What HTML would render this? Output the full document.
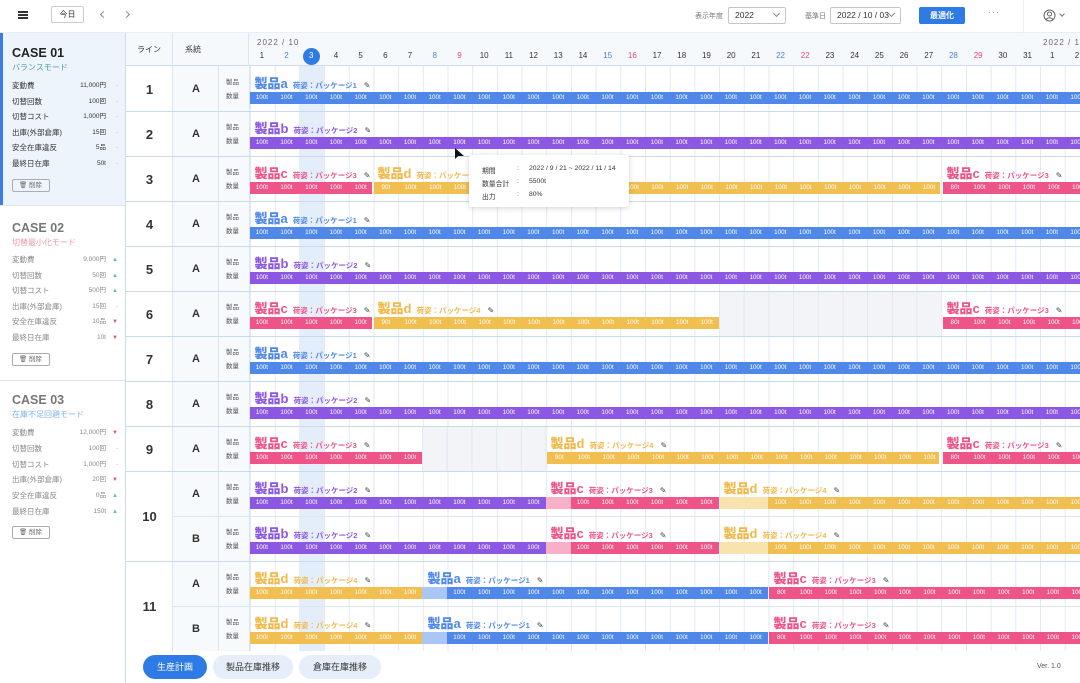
<!DOCTYPE html>
<html><head><meta charset="utf-8"><style>
*{margin:0;padding:0;box-sizing:border-box}
body{width:1080px;height:683px;overflow:hidden;background:#fff;font-family:"Liberation Sans","Noto Sans CJK JP",sans-serif;color:#333;position:relative}
.a{position:absolute}
.top{left:0;top:0;width:1080px;height:33px;background:#fff;border-bottom:1px solid #e8eef5}
.sel{border:1px solid #bfc6cf;border-radius:2px;height:17px;top:7px;font-size:8.5px;line-height:15px;padding-left:6px;color:#333;white-space:nowrap}
.sel b{position:absolute;right:6px;top:3px;width:5px;height:5px;border-right:1px solid #888;border-bottom:1px solid #888;transform:rotate(45deg)}
.side{left:0;top:33px;width:126px;height:650px;border-right:1px solid #cddcee;background:#fff;border-bottom-left-radius:8px}
.card{position:absolute;left:0;width:125px}
.card h2{position:absolute;left:12px;font-size:12.5px;font-weight:bold}
.card .sub{position:absolute;left:12px;font-size:8px}
.m{position:absolute;left:12px;width:108px;font-size:7.5px;height:12px;line-height:12px}
.m span{position:absolute;right:14px;font-size:6.5px}
.m em{position:absolute;right:2px;font-style:normal;font-size:6px}
.del{position:absolute;left:12px;width:38px;height:13px;border:1px solid #aab;border-radius:2px;font-size:6.5px;line-height:11px;padding-left:6px;color:#666}
.up{color:#5cc0a0}.dn{color:#e8507a}.no{color:#bbb}
.hdr{left:126px;top:33px;width:954px;height:33px;background:#f6f9fc;border-bottom:1px solid #cddcee}
.dn2{position:absolute;top:51px;width:24.7px;text-align:center;font-size:8px;color:#333}
.bl{color:#4a7fe0!important}.rd{color:#e8457a!important}
.col1{left:126px;top:66px;width:47px;height:585px;background:#fff;border-right:1px solid #dbe6f2}
.col2{left:173px;top:66px;width:46px;height:585px;background:#f7fafd;border-right:1px solid #dbe6f2}
.col3{left:219px;top:66px;width:30.5px;height:585px;background:#f7fafd;border-right:1px solid #dbe6f2}
#g{left:249.5px;top:66px;width:831px;height:585px;overflow:hidden;background-image:linear-gradient(to right,#e1e9f3 1px,transparent 1px);background-size:24.7px 100%}
.hl{position:absolute;left:49.4px;top:0;width:24.7px;height:585px;background:#e4eefa}
.gr{position:absolute;height:45px;background:#f2f4f7;background-image:linear-gradient(to right,#e1e9f3 1px,transparent 1px);background-size:24.7px 100%}
.bar{position:absolute;height:12px;display:flex;overflow:hidden;white-space:nowrap}
.bar i{flex:0 0 24.7px;text-align:center;font-style:normal;color:#fff;font-size:6.3px;line-height:12px}
.A{background:#4f88e8}.B{background:#8c58e3}.C{background:#ee5488}.D{background:#f1be50}
.lA{background:#aac6f3}.lC{background:#f6b1c8}.lD{background:#f8e2ae}
.lb{position:absolute;white-space:nowrap;font-weight:bold}
.lb b{font-size:13px}.lb s{text-decoration:none;font-size:7.5px;margin-left:5px}.lb u{text-decoration:none;color:#444;font-size:8px;margin-left:7px;font-family:"DejaVu Sans",sans-serif;font-weight:normal}
.tA{color:#4f88e8}.tB{color:#8c58e3}.tC{color:#ee5488}.tD{color:#f0b94a}
.hline{position:absolute;height:1px;background:#c9daee}
.num{position:absolute;left:126px;width:47px;text-align:center;font-weight:bold;font-size:13px}
.sys{position:absolute;left:173px;width:46px;text-align:center;font-weight:bold;font-size:11px}
.pl{position:absolute;left:226px;font-size:6.5px;color:#555;line-height:14px}
.tip{left:469px;top:155px;width:160px;height:52px;background:#fff;border-radius:3px;box-shadow:0 1px 6px rgba(0,0,0,.18);font-size:6.8px;color:#333}
.tip div{position:absolute;left:13px;white-space:nowrap}
.bb{top:651px;left:126px;width:954px;height:32px;background:#fff}
.pill{position:absolute;top:655px;height:24px;border-radius:12px;font-size:9px;line-height:24px;text-align:center}
</style></head><body>

<div class="a top"></div>
<div class="a" style="left:18px;top:11px;width:10px;height:2px;background:#333;box-shadow:0 3px 0 #333,0 6px 0 #333"></div>
<div class="a" style="left:51px;top:6px;width:33px;height:17px;border:1px solid #ccc;border-radius:2px;font-size:8px;line-height:15px;text-align:center">今日</div>
<div class="a" style="left:101px;top:12px;width:5px;height:5px;border-left:1px solid #888;border-bottom:1px solid #888;transform:rotate(45deg)"></div>
<div class="a" style="left:124px;top:12px;width:5px;height:5px;border-right:1px solid #888;border-top:1px solid #888;transform:rotate(45deg)"></div>
<div class="a" style="left:695px;top:11px;font-size:7px;color:#777">表示年度</div>
<div class="a sel" style="left:728px;width:58px">2022<b></b></div>
<div class="a" style="left:805px;top:11px;font-size:7px;color:#777">基準日</div>
<div class="a sel" style="left:830px;width:71px">2022 / 10 / 03<b></b></div>
<div class="a" style="left:919px;top:7px;width:46px;height:17px;background:#2f7be6;border-radius:2px;color:#fff;font-size:8px;font-weight:bold;line-height:17px;text-align:center">最適化</div>
<div class="a" style="left:988px;top:7px;font-size:9px;color:#999;letter-spacing:1px">···</div>
<div class="a" style="left:1023px;top:0;width:1px;height:33px;background:#eef1f5"></div>
<svg class="a" style="left:1043px;top:9px" width="13" height="13" viewBox="0 0 13 13"><circle cx="6.5" cy="6.5" r="5.5" fill="none" stroke="#666"/><circle cx="6.5" cy="5" r="2" fill="none" stroke="#666"/><path d="M3 10.5 Q6.5 7 10 10.5" fill="none" stroke="#666"/></svg>
<div class="a" style="left:1060px;top:12px;width:4px;height:4px;border-right:1px solid #777;border-bottom:1px solid #777;transform:rotate(45deg)"></div>

<!-- sidebar -->
<div class="a side">
 <div class="card" style="top:0;height:172px;background:#eef4fc;border-left:3px solid #3b7de0">
  <h2 style="top:13px;left:9px;color:#222">CASE 01</h2>
  <div class="sub" style="top:29px;left:9px;color:#4f9bb2">バランスモード</div>
  <div class="m" style="top:47px;left:9px">変動費<span>11,000円</span><em class="no">-</em></div>
  <div class="m" style="top:63px;left:9px">切替回数<span>100回</span><em class="no">-</em></div>
  <div class="m" style="top:78px;left:9px">切替コスト<span>1,000円</span><em class="no">-</em></div>
  <div class="m" style="top:94px;left:9px">出庫(外部倉庫)<span>15回</span><em class="no">-</em></div>
  <div class="m" style="top:109px;left:9px">安全在庫違反<span>5品</span><em class="no">-</em></div>
  <div class="m" style="top:125px;left:9px">最終日在庫<span>50t</span><em class="no">-</em></div>
  <div class="del" style="top:146px;left:9px">🗑 削除</div>
 </div>
 <div class="card" style="top:172px;height:175px;border-top:1px solid #dde6f0;color:#888">
  <h2 style="top:15px;color:#777">CASE 02</h2>
  <div class="sub" style="top:31px;color:#e99aa8">切替最小化モード</div>
  <div class="m" style="top:48px">変動費<span>9,000円</span><em class="up">▲</em></div>
  <div class="m" style="top:64px">切替回数<span>50回</span><em class="up">▲</em></div>
  <div class="m" style="top:79px">切替コスト<span>500円</span><em class="up">▲</em></div>
  <div class="m" style="top:95px">出庫(外部倉庫)<span>15回</span><em class="no">-</em></div>
  <div class="m" style="top:110px">安全在庫違反<span>10品</span><em class="dn">▼</em></div>
  <div class="m" style="top:126px">最終日在庫<span>10t</span><em class="dn">▼</em></div>
  <div class="del" style="top:147px">🗑 削除</div>
 </div>
 <div class="card" style="top:347px;height:175px;border-top:1px solid #dde6f0;color:#888">
  <h2 style="top:12px;color:#777">CASE 03</h2>
  <div class="sub" style="top:28px;color:#7fb4e8">在庫不足回避モード</div>
  <div class="m" style="top:46px">変動費<span>12,000円</span><em class="dn">▼</em></div>
  <div class="m" style="top:62px">切替回数<span>100回</span><em class="no">-</em></div>
  <div class="m" style="top:78px">切替コスト<span>1,000円</span><em class="no">-</em></div>
  <div class="m" style="top:93px">出庫(外部倉庫)<span>20回</span><em class="dn">▼</em></div>
  <div class="m" style="top:109px">安全在庫違反<span>0品</span><em class="up">▲</em></div>
  <div class="m" style="top:125px">最終日在庫<span>150t</span><em class="up">▲</em></div>
  <div class="del" style="top:145px">🗑 削除</div>
 </div>
</div>

<!-- header -->
<div class="a hdr"></div>
<div class="a" style="left:126px;top:33px;width:47px;height:33px;border-right:1px solid #dbe6f2;font-size:8px;text-align:center;line-height:33px">ライン</div>
<div class="a" style="left:173px;top:33px;width:76px;height:33px;border-right:1px solid #dbe6f2;font-size:8px;padding-left:12px;line-height:33px">系統</div>
<div class="a" style="left:257px;top:38px;font-size:8px;color:#666;letter-spacing:1px;white-space:nowrap">2022 / 10</div>
<div class="a" style="left:1043px;top:38px;font-size:8px;color:#666;letter-spacing:1px;white-space:nowrap">2022 / 11</div>
<div class="a" style="left:303px;top:48px;width:17px;height:17px;border-radius:50%;background:#2f7be6"></div>
<div class="a" style="left:249.5px;top:0;width:840px;height:66px">
<div class="dn2" style="left:0">1</div><div class="dn2 bl" style="left:24.7px">2</div><div class="dn2" style="left:49.4px;color:#fff">3</div><div class="dn2" style="left:74.1px">4</div><div class="dn2" style="left:98.8px">5</div><div class="dn2" style="left:123.5px">6</div><div class="dn2" style="left:148.2px">7</div><div class="dn2 bl" style="left:172.9px">8</div><div class="dn2 rd" style="left:197.6px">9</div><div class="dn2" style="left:222.3px">10</div><div class="dn2" style="left:247px">11</div><div class="dn2" style="left:271.7px">12</div><div class="dn2" style="left:296.4px">13</div><div class="dn2" style="left:321.1px">14</div><div class="dn2 bl" style="left:345.8px">15</div><div class="dn2 rd" style="left:370.5px">16</div><div class="dn2" style="left:395.2px">17</div><div class="dn2" style="left:419.9px">18</div><div class="dn2" style="left:444.6px">19</div><div class="dn2" style="left:469.3px">20</div><div class="dn2" style="left:494px">21</div><div class="dn2 bl" style="left:518.7px">22</div><div class="dn2 rd" style="left:543.4px">22</div><div class="dn2" style="left:568.1px">23</div><div class="dn2" style="left:592.8px">24</div><div class="dn2" style="left:617.5px">25</div><div class="dn2" style="left:642.2px">26</div><div class="dn2" style="left:666.9px">27</div><div class="dn2 bl" style="left:691.6px">28</div><div class="dn2 rd" style="left:716.3px">29</div><div class="dn2" style="left:741px">30</div><div class="dn2" style="left:765.7px">31</div><div class="dn2" style="left:790.4px">1</div><div class="dn2" style="left:815.1px">2</div>
</div>

<div class="a col1"></div><div class="a col2"></div><div class="a col3"></div>

<div class="a" id="g">
 <div class="hl"></div>
 <div class="gr" style="left:469.3px;top:225px;width:222.3px"></div>
 <div class="gr" style="left:172.9px;top:360px;width:123.5px"></div>

 <div class="lb tA" style="left:5px;top:7px"><b>製品a</b><s>荷姿：パッケージ1</s><u>✎</u></div>
 <div class="bar A" style="left:0;top:26px;width:840px"><i>100t</i><i>100t</i><i>100t</i><i>100t</i><i>100t</i><i>100t</i><i>100t</i><i>100t</i><i>100t</i><i>100t</i><i>100t</i><i>100t</i><i>100t</i><i>100t</i><i>100t</i><i>100t</i><i>100t</i><i>100t</i><i>100t</i><i>100t</i><i>100t</i><i>100t</i><i>100t</i><i>100t</i><i>100t</i><i>100t</i><i>100t</i><i>100t</i><i>100t</i><i>100t</i><i>100t</i><i>100t</i><i>100t</i><i>100t</i></div>
 <div class="lb tB" style="left:5px;top:52px"><b>製品b</b><s>荷姿：パッケージ2</s><u>✎</u></div>
 <div class="bar B" style="left:0;top:71px;width:840px"><i>100t</i><i>100t</i><i>100t</i><i>100t</i><i>100t</i><i>100t</i><i>100t</i><i>100t</i><i>100t</i><i>100t</i><i>100t</i><i>100t</i><i>100t</i><i>100t</i><i>100t</i><i>100t</i><i>100t</i><i>100t</i><i>100t</i><i>100t</i><i>100t</i><i>100t</i><i>100t</i><i>100t</i><i>100t</i><i>100t</i><i>100t</i><i>100t</i><i>100t</i><i>100t</i><i>100t</i><i>100t</i><i>100t</i><i>100t</i></div>
 <div class="lb tC" style="left:5px;top:97px"><b>製品c</b><s>荷姿：パッケージ3</s><u>✎</u></div>
 <div class="lb tD" style="left:128px;top:97px"><b>製品d</b><s>荷姿：パッケージ4</s></div>
 <div class="lb tC" style="left:697px;top:97px"><b>製品c</b><s>荷姿：パッケージ3</s><u>✎</u></div>
 <div class="bar C" style="left:0;top:116px;width:122.5px"><i>100t</i><i>100t</i><i>100t</i><i>100t</i><i>100t</i></div>
 <div class="bar D" style="left:124px;top:116px;width:566px"><i>90t</i><i>100t</i><i>100t</i><i>100t</i><i>100t</i><i>100t</i><i>100t</i><i>100t</i><i>100t</i><i>100t</i><i>100t</i><i>100t</i><i>100t</i><i>100t</i><i>100t</i><i>100t</i><i>100t</i><i>100t</i><i>100t</i><i>100t</i><i>100t</i><i>100t</i><i>100t</i></div>
 <div class="bar C" style="left:693px;top:116px;width:150px"><i>80t</i><i>100t</i><i>100t</i><i>100t</i><i>100t</i><i>100t</i></div>
 <div class="lb tA" style="left:5px;top:142px"><b>製品a</b><s>荷姿：パッケージ1</s><u>✎</u></div>
 <div class="bar A" style="left:0;top:161px;width:840px"><i>100t</i><i>100t</i><i>100t</i><i>100t</i><i>100t</i><i>100t</i><i>100t</i><i>100t</i><i>100t</i><i>100t</i><i>100t</i><i>100t</i><i>100t</i><i>100t</i><i>100t</i><i>100t</i><i>100t</i><i>100t</i><i>100t</i><i>100t</i><i>100t</i><i>100t</i><i>100t</i><i>100t</i><i>100t</i><i>100t</i><i>100t</i><i>100t</i><i>100t</i><i>100t</i><i>100t</i><i>100t</i><i>100t</i><i>100t</i></div>
 <div class="lb tB" style="left:5px;top:187px"><b>製品b</b><s>荷姿：パッケージ2</s><u>✎</u></div>
 <div class="bar B" style="left:0;top:206px;width:840px"><i>100t</i><i>100t</i><i>100t</i><i>100t</i><i>100t</i><i>100t</i><i>100t</i><i>100t</i><i>100t</i><i>100t</i><i>100t</i><i>100t</i><i>100t</i><i>100t</i><i>100t</i><i>100t</i><i>100t</i><i>100t</i><i>100t</i><i>100t</i><i>100t</i><i>100t</i><i>100t</i><i>100t</i><i>100t</i><i>100t</i><i>100t</i><i>100t</i><i>100t</i><i>100t</i><i>100t</i><i>100t</i><i>100t</i><i>100t</i></div>
 <div class="lb tC" style="left:5px;top:232px"><b>製品c</b><s>荷姿：パッケージ3</s><u>✎</u></div>
 <div class="lb tD" style="left:128px;top:232px"><b>製品d</b><s>荷姿：パッケージ4</s><u>✎</u></div>
 <div class="lb tC" style="left:697px;top:232px"><b>製品c</b><s>荷姿：パッケージ3</s><u>✎</u></div>
 <div class="bar C" style="left:0;top:251px;width:122.5px"><i>100t</i><i>100t</i><i>100t</i><i>100t</i><i>100t</i></div>
 <div class="bar D" style="left:124px;top:251px;width:345px"><i>90t</i><i>100t</i><i>100t</i><i>100t</i><i>100t</i><i>100t</i><i>100t</i><i>100t</i><i>100t</i><i>100t</i><i>100t</i><i>100t</i><i>100t</i><i>100t</i></div>
 <div class="bar C" style="left:693px;top:251px;width:150px"><i>80t</i><i>100t</i><i>100t</i><i>100t</i><i>100t</i><i>100t</i></div>
 <div class="lb tA" style="left:5px;top:277px"><b>製品a</b><s>荷姿：パッケージ1</s><u>✎</u></div>
 <div class="bar A" style="left:0;top:296px;width:840px"><i>100t</i><i>100t</i><i>100t</i><i>100t</i><i>100t</i><i>100t</i><i>100t</i><i>100t</i><i>100t</i><i>100t</i><i>100t</i><i>100t</i><i>100t</i><i>100t</i><i>100t</i><i>100t</i><i>100t</i><i>100t</i><i>100t</i><i>100t</i><i>100t</i><i>100t</i><i>100t</i><i>100t</i><i>100t</i><i>100t</i><i>100t</i><i>100t</i><i>100t</i><i>100t</i><i>100t</i><i>100t</i><i>100t</i><i>100t</i></div>
 <div class="lb tB" style="left:5px;top:322px"><b>製品b</b><s>荷姿：パッケージ2</s><u>✎</u></div>
 <div class="bar B" style="left:0;top:341px;width:840px"><i>100t</i><i>100t</i><i>100t</i><i>100t</i><i>100t</i><i>100t</i><i>100t</i><i>100t</i><i>100t</i><i>100t</i><i>100t</i><i>100t</i><i>100t</i><i>100t</i><i>100t</i><i>100t</i><i>100t</i><i>100t</i><i>100t</i><i>100t</i><i>100t</i><i>100t</i><i>100t</i><i>100t</i><i>100t</i><i>100t</i><i>100t</i><i>100t</i><i>100t</i><i>100t</i><i>100t</i><i>100t</i><i>100t</i><i>100t</i></div>
 <div class="lb tC" style="left:5px;top:367px"><b>製品c</b><s>荷姿：パッケージ3</s><u>✎</u></div>
 <div class="lb tD" style="left:301px;top:367px"><b>製品d</b><s>荷姿：パッケージ4</s><u>✎</u></div>
 <div class="lb tC" style="left:697px;top:367px"><b>製品c</b><s>荷姿：パッケージ3</s><u>✎</u></div>
 <div class="bar C" style="left:0;top:386px;width:172px"><i>100t</i><i>100t</i><i>100t</i><i>100t</i><i>100t</i><i>100t</i><i>100t</i></div>
 <div class="bar D" style="left:297.4px;top:386px;width:392.6px"><i>90t</i><i>100t</i><i>100t</i><i>100t</i><i>100t</i><i>100t</i><i>100t</i><i>100t</i><i>100t</i><i>100t</i><i>100t</i><i>100t</i><i>100t</i><i>100t</i><i>100t</i><i>100t</i></div>
 <div class="bar C" style="left:693px;top:386px;width:150px"><i>80t</i><i>100t</i><i>100t</i><i>100t</i><i>100t</i><i>100t</i></div>
 <div class="lb tB" style="left:5px;top:412px"><b>製品b</b><s>荷姿：パッケージ2</s><u>✎</u></div>
 <div class="lb tC" style="left:301px;top:412px"><b>製品c</b><s>荷姿：パッケージ3</s><u>✎</u></div>
 <div class="lb tD" style="left:474px;top:412px"><b>製品d</b><s>荷姿：パッケージ4</s><u>✎</u></div>
 <div class="bar B" style="left:0;top:431px;width:296.4px"><i>100t</i><i>100t</i><i>100t</i><i>100t</i><i>100t</i><i>100t</i><i>100t</i><i>100t</i><i>100t</i><i>100t</i><i>100t</i><i>100t</i></div>
 <div class="bar lC" style="left:296.4px;top:431px;width:24.7px"></div>
 <div class="bar C" style="left:321.1px;top:431px;width:148.2px"><i>100t</i><i>100t</i><i>100t</i><i>100t</i><i>100t</i><i>100t</i></div>
 <div class="bar lD" style="left:470px;top:431px;width:48.7px"></div>
 <div class="bar D" style="left:518.7px;top:431px;width:330px"><i>100t</i><i>100t</i><i>100t</i><i>100t</i><i>100t</i><i>100t</i><i>100t</i><i>100t</i><i>100t</i><i>100t</i><i>100t</i><i>100t</i><i>100t</i><i>100t</i></div>
 <div class="lb tB" style="left:5px;top:457px"><b>製品b</b><s>荷姿：パッケージ2</s><u>✎</u></div>
 <div class="lb tC" style="left:301px;top:457px"><b>製品c</b><s>荷姿：パッケージ3</s><u>✎</u></div>
 <div class="lb tD" style="left:474px;top:457px"><b>製品d</b><s>荷姿：パッケージ4</s><u>✎</u></div>
 <div class="bar B" style="left:0;top:476px;width:296.4px"><i>100t</i><i>100t</i><i>100t</i><i>100t</i><i>100t</i><i>100t</i><i>100t</i><i>100t</i><i>100t</i><i>100t</i><i>100t</i><i>100t</i></div>
 <div class="bar lC" style="left:296.4px;top:476px;width:24.7px"></div>
 <div class="bar C" style="left:321.1px;top:476px;width:148.2px"><i>100t</i><i>100t</i><i>100t</i><i>100t</i><i>100t</i><i>100t</i></div>
 <div class="bar lD" style="left:470px;top:476px;width:48.7px"></div>
 <div class="bar D" style="left:518.7px;top:476px;width:330px"><i>100t</i><i>100t</i><i>100t</i><i>100t</i><i>100t</i><i>100t</i><i>100t</i><i>100t</i><i>100t</i><i>100t</i><i>100t</i><i>100t</i><i>100t</i><i>100t</i></div>
 <div class="lb tD" style="left:5px;top:502px"><b>製品d</b><s>荷姿：パッケージ4</s><u>✎</u></div>
 <div class="lb tA" style="left:178px;top:502px"><b>製品a</b><s>荷姿：パッケージ1</s><u>✎</u></div>
 <div class="lb tC" style="left:524px;top:502px"><b>製品c</b><s>荷姿：パッケージ3</s><u>✎</u></div>
 <div class="bar D" style="left:0;top:521px;width:172px"><i>100t</i><i>100t</i><i>100t</i><i>100t</i><i>100t</i><i>100t</i><i>100t</i></div>
 <div class="bar lA" style="left:172.9px;top:521px;width:24.7px"></div>
 <div class="bar A" style="left:197.6px;top:521px;width:321.1px"><i>100t</i><i>100t</i><i>100t</i><i>100t</i><i>100t</i><i>100t</i><i>100t</i><i>100t</i><i>100t</i><i>100t</i><i>100t</i><i>100t</i><i>100t</i></div>
 <div class="bar C" style="left:519.5px;top:521px;width:330px"><i>80t</i><i>100t</i><i>100t</i><i>100t</i><i>100t</i><i>100t</i><i>100t</i><i>100t</i><i>100t</i><i>100t</i><i>100t</i><i>100t</i><i>100t</i><i>100t</i></div>
 <div class="lb tD" style="left:5px;top:547px"><b>製品d</b><s>荷姿：パッケージ4</s><u>✎</u></div>
 <div class="lb tA" style="left:178px;top:547px"><b>製品a</b><s>荷姿：パッケージ1</s><u>✎</u></div>
 <div class="lb tC" style="left:524px;top:547px"><b>製品c</b><s>荷姿：パッケージ3</s><u>✎</u></div>
 <div class="bar D" style="left:0;top:566px;width:172px"><i>100t</i><i>100t</i><i>100t</i><i>100t</i><i>100t</i><i>100t</i><i>100t</i></div>
 <div class="bar lA" style="left:172.9px;top:566px;width:24.7px"></div>
 <div class="bar A" style="left:197.6px;top:566px;width:321.1px"><i>100t</i><i>100t</i><i>100t</i><i>100t</i><i>100t</i><i>100t</i><i>100t</i><i>100t</i><i>100t</i><i>100t</i><i>100t</i><i>100t</i><i>100t</i></div>
 <div class="bar C" style="left:519.5px;top:566px;width:330px"><i>80t</i><i>100t</i><i>100t</i><i>100t</i><i>100t</i><i>100t</i><i>100t</i><i>100t</i><i>100t</i><i>100t</i><i>100t</i><i>100t</i><i>100t</i><i>100t</i></div>
</div>

<div class="hline" style="left:126px;width:954px;top:111px"></div>
<div class="hline" style="left:126px;width:954px;top:156px"></div>
<div class="hline" style="left:126px;width:954px;top:201px"></div>
<div class="hline" style="left:126px;width:954px;top:246px"></div>
<div class="hline" style="left:126px;width:954px;top:291px"></div>
<div class="hline" style="left:126px;width:954px;top:336px"></div>
<div class="hline" style="left:126px;width:954px;top:381px"></div>
<div class="hline" style="left:126px;width:954px;top:426px"></div>
<div class="hline" style="left:126px;width:954px;top:471px"></div>
<div class="hline" style="left:173px;width:907px;top:516px;background:#dbe6f2"></div>
<div class="hline" style="left:126px;width:954px;top:561px"></div>
<div class="hline" style="left:173px;width:907px;top:606px;background:#dbe6f2"></div>

<div class="num" style="top:82px">1</div><div class="num" style="top:127px">2</div><div class="num" style="top:172px">3</div><div class="num" style="top:217px">4</div><div class="num" style="top:262px">5</div><div class="num" style="top:307px">6</div><div class="num" style="top:352px">7</div><div class="num" style="top:397px">8</div><div class="num" style="top:442px">9</div><div class="num" style="top:509px">10</div><div class="num" style="top:599px">11</div>
<div class="sys" style="top:83px">A</div><div class="sys" style="top:128px">A</div><div class="sys" style="top:173px">A</div><div class="sys" style="top:218px">A</div><div class="sys" style="top:263px">A</div><div class="sys" style="top:308px">A</div><div class="sys" style="top:353px">A</div><div class="sys" style="top:398px">A</div><div class="sys" style="top:443px">A</div><div class="sys" style="top:488px">A</div><div class="sys" style="top:533px">B</div><div class="sys" style="top:578px">A</div><div class="sys" style="top:623px">B</div>
<div class="pl" style="top:76px">製品<br>数量</div><div class="pl" style="top:121px">製品<br>数量</div><div class="pl" style="top:166px">製品<br>数量</div><div class="pl" style="top:211px">製品<br>数量</div><div class="pl" style="top:256px">製品<br>数量</div><div class="pl" style="top:301px">製品<br>数量</div><div class="pl" style="top:346px">製品<br>数量</div><div class="pl" style="top:391px">製品<br>数量</div><div class="pl" style="top:436px">製品<br>数量</div><div class="pl" style="top:481px">製品<br>数量</div><div class="pl" style="top:526px">製品<br>数量</div><div class="pl" style="top:571px">製品<br>数量</div><div class="pl" style="top:616px">製品<br>数量</div>

<svg class="a" style="left:454px;top:147px" width="12" height="14" viewBox="0 0 12 14"><path d="M1 1 L1 12 L4 9 L10 9 Z" fill="#111"/></svg>
<div class="a tip">
 <div style="top:10px">期間</div><div style="top:10px;left:48px">:</div><div style="top:10px;left:60px">2022 / 9 / 21 ~ 2022 / 11 / 14</div>
 <div style="top:23px">数量合計</div><div style="top:23px;left:48px">:</div><div style="top:23px;left:60px">5500t</div>
 <div style="top:36px">出力</div><div style="top:36px;left:48px">:</div><div style="top:36px;left:60px">80%</div>
</div>

<div class="a bb"></div>
<div class="pill" style="left:143px;width:64px;background:#2f7be6;color:#fff">生産計画</div>
<div class="pill" style="left:213px;width:80px;background:#e5eef9;color:#333">製品在庫推移</div>
<div class="pill" style="left:299px;width:82px;background:#e5eef9;color:#333">倉庫在庫推移</div>
<div class="a" style="left:1037px;top:663px;font-size:7px;color:#555">Ver. 1.0</div>
</body></html>
